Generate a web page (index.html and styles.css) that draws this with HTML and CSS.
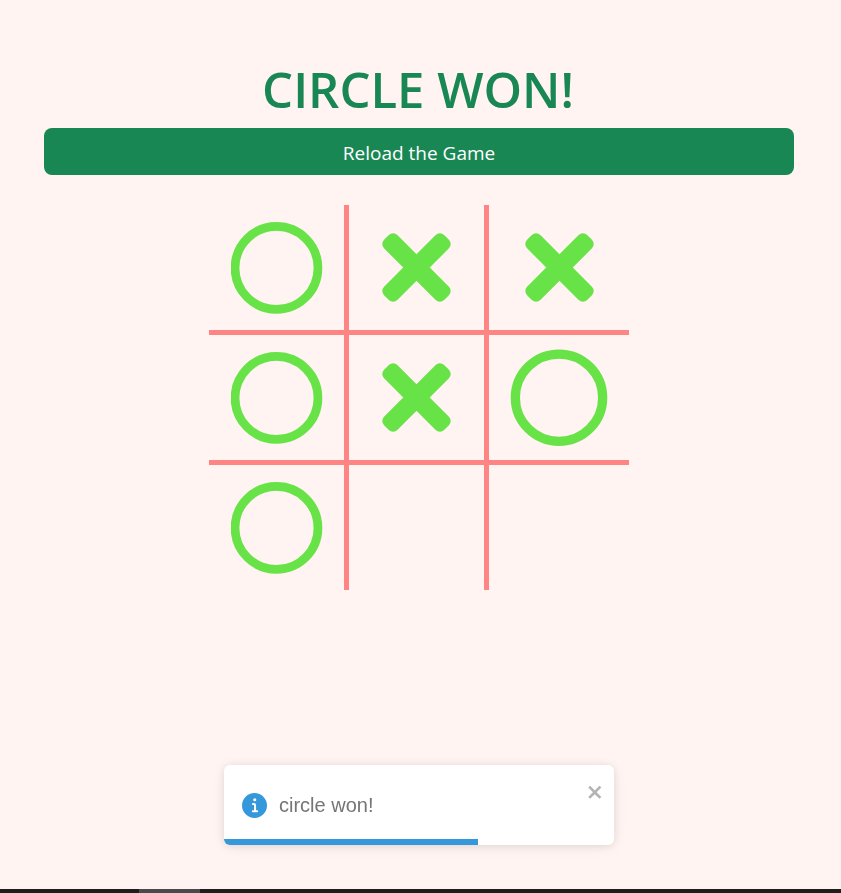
FILE: index.html
```html
<!DOCTYPE html>
<html lang="en">
<head>
<meta charset="utf-8">
<title>Tic Tac Toe</title>
<link rel="stylesheet" href="styles.css">
</head>
<body>
<main class="game">
  <h1 class="title">CIRCLE WON!</h1>
  <button class="reload">Reload the Game</button>
  <div class="board">
    <div class="cell border-r border-b"><svg class="mark-o" viewBox="0 0 92 92"><circle cx="45.5" cy="45.9" r="41.45"/></svg></div>
    <div class="cell border-r border-b"><svg class="mark-x" viewBox="0 0 69 69"><rect x="-8" y="25.1" width="85" height="18.8" rx="6" transform="rotate(45 34.5 34.5)"/><rect x="-8" y="25.1" width="85" height="18.8" rx="6" transform="rotate(-45 34.5 34.5)"/></svg></div>
    <div class="cell border-b"><svg class="mark-x" viewBox="0 0 69 69"><rect x="-8" y="25.1" width="85" height="18.8" rx="6" transform="rotate(45 34.5 34.5)"/><rect x="-8" y="25.1" width="85" height="18.8" rx="6" transform="rotate(-45 34.5 34.5)"/></svg></div>
    <div class="cell border-r border-b"><svg class="mark-o" viewBox="0 0 92 92"><circle cx="45.5" cy="45.9" r="41.45"/></svg></div>
    <div class="cell border-r border-b"><svg class="mark-x" viewBox="0 0 69 69"><rect x="-8" y="25.1" width="85" height="18.8" rx="6" transform="rotate(45 34.5 34.5)"/><rect x="-8" y="25.1" width="85" height="18.8" rx="6" transform="rotate(-45 34.5 34.5)"/></svg></div>
    <div class="cell border-b"><svg class="mark-o wide" viewBox="0 0 98 98"><circle cx="49" cy="48.7" r="43.65"/></svg></div>
    <div class="cell border-r"><svg class="mark-o" viewBox="0 0 92 92"><circle cx="45.5" cy="45.9" r="41.45"/></svg></div>
    <div class="cell border-r"></div>
    <div class="cell"></div>
  </div>
</main>
<div class="toast">
  <div class="toast-body">
    <svg class="toast-icon" viewBox="0 0 24 24"><path d="M12 0a12 12 0 1012 12A12.013 12.013 0 0012 0zm.25 5a1.5 1.5 0 11-1.5 1.5 1.5 1.5 0 011.5-1.5zm2.25 13.5h-4a1 1 0 010-2h.75a.25.25 0 00.25-.25v-4.5a.25.25 0 00-.25-.25h-.75a1 1 0 010-2h1a2 2 0 012 2v4.75a.25.25 0 00.25.25h.75a1 1 0 110 2z"/></svg>
    <span class="toast-text">circle won!</span>
  </div>
  <svg class="toast-close" viewBox="0 0 14 16"><path d="M7.71 8.23l3.75 3.75-1.48 1.48-3.75-3.75-3.75 3.75L1 11.98l3.75-3.75L1 4.48 2.48 3l3.75 3.75L9.98 3l1.48 1.48-3.75 3.75z"/></svg>
  <div class="toast-progress"></div>
</div>
<div class="taskbar"><div class="taskbar-thumb"></div></div>
</body>
</html>
```
FILE: styles.css
```css
* { box-sizing: border-box; }
html, body { height: 100%; }
body {
  margin: 0;
  background: #fff4f2;
  font-family: "Open Sans", "Noto Sans", sans-serif;
  overflow: hidden;
}
.game {
  padding: 62px 47px 0 44px;
}
.title {
  margin: 0 0 8px;
  height: 58px;
  padding-right: 2px;
  line-height: 54px;
  font-size: 49px;
  font-weight: 600;
  text-align: center;
  color: #198754;
}
.reload {
  display: block;
  width: 100%;
  height: 47px;
  padding: 2px 0 0;
  border: 0;
  border-radius: 8px;
  background: #198754;
  color: #fff;
  font-family: inherit;
  font-size: 19px;
}
.board {
  display: grid;
  grid-template-columns: repeat(3, 140px);
  grid-template-rows: 130px 130px 125px;
  justify-content: start;
  margin: 30px 0 0 165px;
}
.cell {
  display: flex;
  align-items: center;
  justify-content: center;
}
.border-r { border-right: 5px solid #ff8585; }
.border-b { border-bottom: 5px solid #ff8585; }
.mark-o { width: 92px; height: 92px; }
.mark-o.wide { width: 98px; height: 98px; }
.mark-o circle { fill: none; stroke: #68e347; stroke-width: 8.7; }
.mark-o.wide circle { stroke-width: 9.3; }
.mark-x { width: 69px; height: 69px; }
.mark-x rect { fill: #68e347; }
.toast {
  position: absolute;
  left: 224px;
  top: 765px;
  width: 390px;
  height: 80px;
  border-radius: 6px;
  overflow: hidden;
  background: #fff;
  box-shadow: 0 1px 10px rgba(0, 0, 0, 0.1), 0 2px 15px rgba(0, 0, 0, 0.05);
  transform: translateZ(0);
  will-change: transform;
}
.toast-body {
  display: flex;
  align-items: center;
  gap: 12px;
  height: 80px;
  padding: 0 18px;
}
.toast-icon { width: 25px; height: 25px; flex: none; fill: #3498db; }
.toast-text {
  font-family: "Liberation Sans", Arial, sans-serif;
  font-size: 20px;
  color: #757575;
}
.toast-close {
  position: absolute;
  top: 17.25px;
  left: 362.75px;
  width: 17.5px;
  height: 20px;
  fill: #b3b3b3;
}
.toast-progress {
  position: absolute;
  left: 0;
  bottom: 0;
  width: 254px;
  height: 6px;
  background: #3498db;
}
.taskbar {
  position: absolute;
  left: 0;
  right: 0;
  bottom: 0;
  height: 4px;
  background: #1f1c1c;
}
.taskbar-thumb {
  width: 61px;
  height: 4px;
  margin-left: 139px;
  background: #4a4a4a;
}
```
